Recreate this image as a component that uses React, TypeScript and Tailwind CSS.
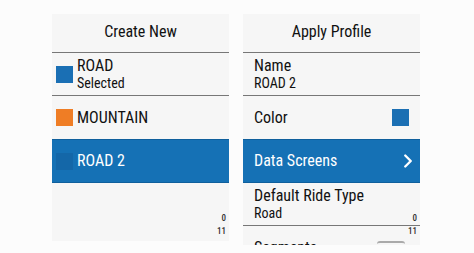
import React from 'react';
import { ChevronRight } from 'lucide-react';

const font = { fontFamily: '"Roboto Condensed", "Liberation Sans Narrow", Roboto, sans-serif' };

function Swatch({ color }: { color: string }) {
  return <div className={`w-[17px] h-[17px] shrink-0 ${color}`} />;
}

function Counter() {
  return (
    <div className="absolute right-[3px] top-[198px] flex flex-col items-end text-[9px] leading-[13px] font-medium text-[#333]">
      <span>0</span>
      <span>11</span>
    </div>
  );
}

function CreateNew() {
  return (
    <div className="relative w-[177px] h-[227px] bg-[#f6f6f6] overflow-hidden text-[#111]">
      <div className="h-[39px] border-b border-[#777] flex items-center justify-center pb-[2px] text-[16px]">
        Create New
      </div>
      <div className="h-[43px] border-b border-[#777] flex items-center gap-[4px] pl-[4px]">
        <Swatch color="bg-[#1a6fb4]" />
        <div className="flex flex-col gap-[2px]">
          <span className="text-[16px] leading-[16px]">ROAD</span>
          <span className="text-[14px] leading-[14px]">Selected</span>
        </div>
      </div>
      <div className="h-[43px] flex items-center gap-[4px] pl-[4px]">
        <Swatch color="bg-[#ef7d25]" />
        <span className="text-[16px] leading-[16px]">MOUNTAIN</span>
      </div>
      <div className="h-[44px] bg-[#1571b5] border-y border-[#0f5f9c] flex items-center gap-[4px] pl-[4px] text-white">
        <Swatch color="bg-[#1467a8]" />
        <span className="text-[16px] leading-[16px]">ROAD 2</span>
      </div>
      <Counter />
    </div>
  );
}

function ApplyProfile() {
  return (
    <div className="relative w-[177px] h-[231px] bg-[#f6f6f6] overflow-hidden text-[#111]">
      <div className="h-[39px] border-b border-[#777] flex items-center justify-center pb-[2px] text-[16px]">
        Apply Profile
      </div>
      <div className="h-[43px] border-b border-[#777] flex flex-col justify-center gap-[2px] pl-[11px]">
        <span className="text-[16px] leading-[16px]">Name</span>
        <span className="text-[14px] leading-[14px]">ROAD 2</span>
      </div>
      <div className="h-[43px] flex items-center justify-between pl-[11px] pr-[11px]">
        <span className="text-[16px] leading-[16px]">Color</span>
        <Swatch color="bg-[#1b6fb3]" />
      </div>
      <div className="h-[44px] bg-[#1571b5] border-y border-[#0f5f9c] flex items-center justify-between pl-[11px] pr-[1px] text-white">
        <span className="text-[16px] leading-[16px]">Data Screens</span>
        <ChevronRight size={22} strokeWidth={2.6} />
      </div>
      <div className="h-[43px] border-b border-[#777] flex flex-col justify-center gap-[2px] pl-[11px]">
        <span className="text-[16px] leading-[16px]">Default Ride Type</span>
        <span className="text-[14px] leading-[14px]">Road</span>
      </div>
      <div className="h-[43px] flex items-center justify-between pl-[11px] pr-[15px]">
        <span className="text-[16px] leading-[16px]">Segments</span>
        <div className="w-[28px] h-[14px] rounded-[3px] border-t-2 border-[#aaa]" />
      </div>
      <Counter />
    </div>
  );
}

export default function App() {
  return (
    <div className="w-[474px] h-[253px] bg-[#fcfcfc] overflow-hidden" style={font}>
      <div className="flex gap-[14px] pl-[52px] pt-[14px]">
        <CreateNew />
        <ApplyProfile />
      </div>
    </div>
  );
}
